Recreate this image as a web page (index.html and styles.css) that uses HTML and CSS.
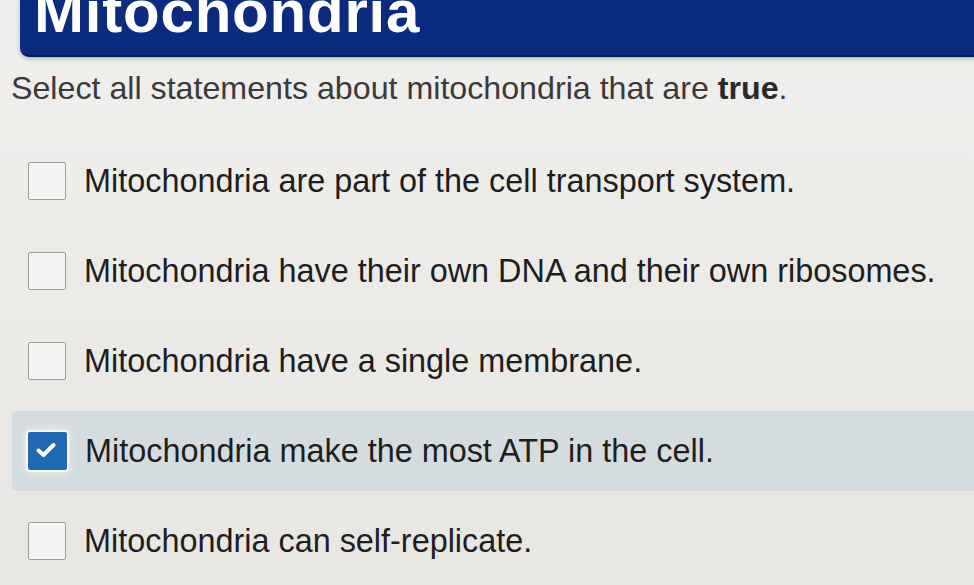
FILE: index.html
```html
<!DOCTYPE html>
<html lang="en">
<head>
<meta charset="utf-8">
<title>Mitochondria</title>
<link rel="stylesheet" href="styles.css">
</head>
<body>
<div class="page">
  <header class="banner">
    <h1 class="title">Mitochondria</h1>
  </header>
  <p class="prompt">Select all statements about mitochondria that are <b>true</b>.</p>
  <ul class="options">
    <li class="option">
      <span class="box"></span>
      <span class="label">Mitochondria are part of the cell transport system.</span>
    </li>
    <li class="option">
      <span class="box"></span>
      <span class="label">Mitochondria have their own DNA and their own ribosomes.</span>
    </li>
    <li class="option">
      <span class="box"></span>
      <span class="label">Mitochondria have a single membrane.</span>
    </li>
    <li class="option selected">
      <span class="box checked">
        <svg class="tick" width="22" height="18" viewBox="0 0 22 18"><polyline points="3.5,9.5 8.5,14 18.5,4" fill="none" stroke="#fff" stroke-width="4" stroke-linecap="round" stroke-linejoin="round"/></svg>
      </span>
      <span class="label">Mitochondria make the most ATP in the cell.</span>
    </li>
    <li class="option">
      <span class="box"></span>
      <span class="label">Mitochondria can self-replicate.</span>
    </li>
  </ul>
</div>
</body>
</html>
```

FILE: styles.css
```css
html, body {
  margin: 0;
  padding: 0;
  height: 100%;
}
body {
  background: linear-gradient(180deg, #efefed 0%, #ecebe8 45%, #e8e6e1 100%);
  font-family: "Liberation Sans", Arial, Helvetica, sans-serif;
  overflow: hidden;
}
.page {
  display: flex;
  flex-direction: column;
}
.banner {
  height: 73px;
  margin: -18px -10px 0 20px;
  background: #0b2b7f;
  border-bottom: 2px solid #061a55;
  border-bottom-left-radius: 9px;
  box-shadow: 0 2px 4px rgba(0, 0, 0, 0.25);
  padding-left: 14px;
}
.title {
  margin: 0;
  font-size: 60px;
  line-height: 60px;
  font-weight: bold;
  letter-spacing: 0.8px;
  color: #ffffff;
}
.prompt {
  margin: 13px 0 0 11px;
  font-size: 32.2px;
  line-height: 37px;
  color: #3a3a3a;
}
.prompt b {
  color: #2a2a2a;
}
.options {
  list-style: none;
  margin: 34px 0 0 12px;
  padding: 0;
  display: flex;
  flex-direction: column;
  gap: 10px;
}
.option {
  height: 80px;
  display: flex;
  align-items: center;
  gap: 18px;
  padding-left: 16px;
  border-radius: 4px 0 0 4px;
}
.option.selected {
  background: #d5dcdf;
}
.box {
  flex: none;
  width: 36px;
  height: 36px;
  border: 1.5px solid #9d9d9b;
  border-radius: 2px;
  background: #f4f4f2;
  display: flex;
  align-items: center;
  justify-content: center;
}
.box.checked {
  width: 39px;
  height: 38px;
  border: none;
  background: #1e69b1;
  box-shadow: 0 0 0 2px rgba(255, 255, 255, 0.75), 0 0 6px 3px rgba(255, 255, 255, 0.5);
}
.tick {
  display: block;
  margin: -2px 3px 0 0;
}
.label {
  font-size: 32.4px;
  line-height: 37px;
  color: #1e1e1e;
}
```
